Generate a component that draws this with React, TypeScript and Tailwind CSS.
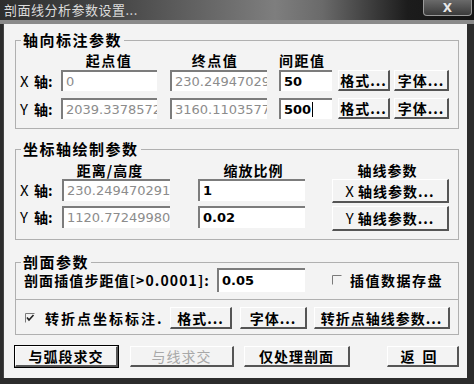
import React from "react";

const cjk = "font-['Noto_Sans_CJK_SC','Noto_Sans',sans-serif]";
const num = "font-['DejaVu_Sans','Noto_Sans',sans-serif]";

type FieldProps = { value: string; className: string; muted?: boolean; caret?: boolean };

const Field = ({ value, className, muted, caret }: FieldProps) => (
  <div
    className={`flex items-center overflow-hidden whitespace-nowrap bg-white pl-[3px] border-t-2 border-l-2 border-t-[#7c7c7c] border-l-[#7c7c7c] text-[13px] leading-[16px] ${num} ${
      muted ? "text-[#8c8c8c]" : "text-black font-bold"
    } ${className}`}
  >
    {value}
    {caret && <span className="ml-[1px] inline-block h-[15px] w-[1px] bg-black" />}
  </div>
);

const Btn = ({ children, className }: { children: React.ReactNode; className: string }) => (
  <div
    className={`flex items-center justify-center bg-[#f3f3f3] border-t border-l border-t-white border-l-white border-r-2 border-b-2 border-r-[#555] border-b-[#555] ${cjk} font-bold text-[14px] leading-[16px] tracking-[1px] ${className}`}
  >
    {children}
  </div>
);

const Group = ({ title, className, children }: { title: string; className: string; children: React.ReactNode }) => (
  <div className={`relative border border-[#b0b0b0] ${className}`}>
    {/* group caption sits on the border line */}
    <span className={`absolute left-[5px] top-[-9px] bg-[#f3f3f3] px-[2px] leading-[16px] text-[15px] font-bold tracking-[1.5px] ${cjk}`}>
      {title}
    </span>
    {children}
  </div>
);

const AxisLabel = ({ axis, className }: { axis: string; className: string }) => (
  <div className={`flex items-center ${cjk} text-[14px] leading-[16px] ${className}`}>
    <span className="font-normal text-[15px] w-[14px]">{axis}</span>
    <span className="font-bold">轴:</span>
  </div>
);

const Check = ({ checked }: { checked?: boolean }) => (
  <svg width="10" height="10" viewBox="0 0 10 10" className="shrink-0">
    <path d="M0.5 9.5V0.5H9.5" fill="none" stroke="#7a7a7a" strokeWidth="1" />
    {checked && <path d="M2 4.5L4 7L8.5 2" fill="none" stroke="#222" strokeWidth="1.6" />}
  </svg>
);

export default function App() {
  return (
    <div className="flex h-[384px] w-[474px] flex-col bg-[#2c2c2c] text-black">
      {/* title bar */}
      <div className="flex h-[20px] shrink-0 items-start bg-[linear-gradient(90deg,#2e2e2e_0%,#474747_25%,#7e7e7e_58%,#6a6a6a_68%,#1c1c1c_86%,#141414_100%)]">
        <span className={`ml-[4px] mt-[2px] text-[13px] leading-[16px] text-[#dcdcdc] tracking-[0.5px] ${cjk}`}>剖面线分析参数设置...</span>
        <div className="ml-auto mr-[2px] flex h-[16px] w-[49px] items-center justify-center rounded-b-[4px] border border-t-0 border-[#9a9a9a] bg-[linear-gradient(180deg,#6a6a6a,#3a3a3a)] text-[12px] font-bold text-[#e8e8e8] font-['DejaVu_Sans',sans-serif]">
          X
        </div>
      </div>
      <div className="h-[4px] shrink-0 bg-[#8a8a8a]" />

      {/* client area */}
      <div className="ml-[3px] mr-[7px] mb-[6px] flex flex-1 flex-col border-l border-[#444] bg-[#f3f3f3] pl-[11px]">
        <Group title="轴向标注参数" className="mt-[16px] h-[89px] w-[444px]">
          <div className={`mt-[11px] flex h-[16px] items-center text-[14px] leading-[16px] font-bold tracking-[1.5px] ${cjk}`}>
            <div className="ml-[45px] w-[96px] text-center">起点值</div>
            <div className="ml-[13px] w-[90px] text-center">终点值</div>
            <div className="ml-[19px]">间距值</div>
          </div>
          <div className="mt-[2px] flex h-[21px] items-stretch">
            <AxisLabel axis="X" className="w-[45px] pl-[4px]" />
            <Field value="0" muted className="w-[96px]" />
            <Field value="230.249470291" muted className="ml-[13px] w-[97px]" />
            <Field value="50" className="ml-[12px] w-[53px]" />
            <Btn className="ml-[6px] w-[52px]">格式...</Btn>
            <Btn className="ml-[4px] w-[55px]">字体...</Btn>
          </div>
          <div className="mt-[7px] flex h-[21px] items-stretch">
            <AxisLabel axis="Y" className="w-[45px] pl-[4px]" />
            <Field value="2039.337857259" muted className="w-[96px]" />
            <Field value="3160.110357719" muted className="ml-[13px] w-[97px]" />
            <Field value="500" caret className="ml-[12px] w-[53px]" />
            <Btn className="ml-[6px] w-[52px]">格式...</Btn>
            <Btn className="ml-[4px] w-[55px]">字体...</Btn>
          </div>
        </Group>

        <Group title="坐标轴绘制参数" className="mt-[20px] h-[91px] w-[444px]">
          <div className={`mt-[12px] flex h-[16px] items-center text-[14px] leading-[16px] font-bold tracking-[1px] ${cjk}`}>
            <div className="ml-[36px] w-[116px] text-center">距离/高度</div>
            <div className="ml-[28px] w-[115px] text-center">缩放比例</div>
            <div className="ml-[20px] w-[113px] text-center">轴线参数</div>
          </div>
          <div className="mt-[1px] flex h-[24px] items-start">
            <AxisLabel axis="X" className="h-[22px] w-[46px] pl-[4px]" />
            <Field value="230.249470291" muted className="h-[22px] w-[108px]" />
            <Field value="1" className="ml-[28px] h-[22px] w-[107px]" />
            <Btn className="ml-[27px] h-[24px] w-[117px]">
              <span className="font-normal text-[15px] mr-[3px]">X</span>轴线参数...
            </Btn>
          </div>
          <div className="mt-[3px] flex h-[25px] items-start">
            <AxisLabel axis="Y" className="h-[22px] w-[46px] pl-[4px]" />
            <Field value="1120.772499807" muted className="h-[22px] w-[108px]" />
            <Field value="0.02" className="ml-[28px] h-[22px] w-[107px]" />
            <Btn className="ml-[27px] h-[25px] w-[117px]">
              <span className="font-normal text-[15px] mr-[3px]">Y</span>轴线参数...
            </Btn>
          </div>
        </Group>

        <Group title="剖面参数" className="mt-[22px] h-[73px] w-[444px]">
          <div className="mt-[5px] flex h-[24px] items-center">
            <div className={`w-[201px] pl-[8px] text-[14px] leading-[16px] font-bold tracking-[1.1px] whitespace-nowrap ${cjk}`}>
              剖面插值步距值[&gt;0.0001]:
            </div>
            <Field value="0.05" className="h-[24px] w-[88px]" />
            <div className="ml-[27px] flex items-center gap-[8px]">
              <Check />
              <span className={`text-[14px] leading-[16px] font-bold tracking-[1.5px] ${cjk}`}>插值数据存盘</span>
            </div>
          </div>
          <div className="mt-[7px] h-[1px] bg-[#b0b0b0]" />
          <div className="mt-[7px] flex h-[22px] items-stretch">
            <div className="flex w-[154px] items-center gap-[10px] pl-[9px]">
              <Check checked />
              <span className={`text-[14px] leading-[16px] font-bold tracking-[2px] ${cjk}`}>转折点坐标标注.</span>
            </div>
            <Btn className="w-[62px]">格式...</Btn>
            <Btn className="ml-[8px] w-[67px]">字体...</Btn>
            <Btn className="ml-[7px] w-[136px]">转折点轴线参数...</Btn>
          </div>
        </Group>

        <div className="mt-[11px] flex h-[21px] items-stretch">
          <Btn className="w-[103px] outline outline-1 outline-black">与弧段求交</Btn>
          <Btn className="ml-[12px] w-[104px] !font-normal text-[#a8a8a8]">与线求交</Btn>
          <Btn className="ml-[10px] w-[106px]">仅处理剖面</Btn>
          <Btn className="ml-[37px] w-[72px]">
            <span className="tracking-[8px]">返回</span>
          </Btn>
        </div>
      </div>
    </div>
  );
}
